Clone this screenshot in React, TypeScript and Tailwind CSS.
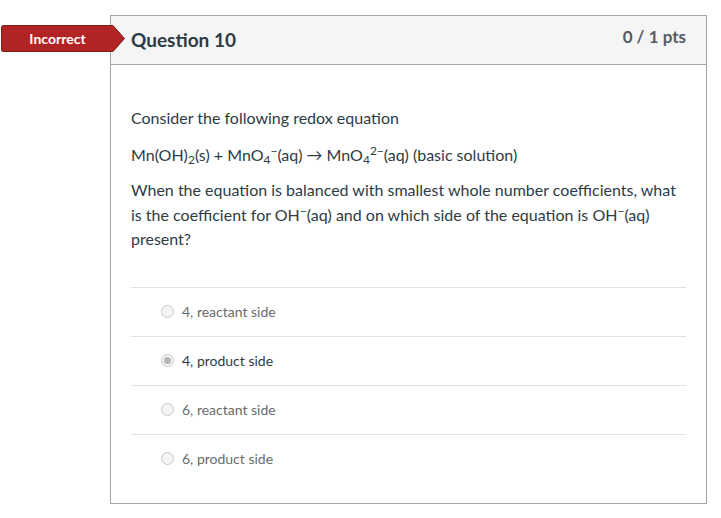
import React from 'react';

const answers = [
  { id: 'a', label: '4, reactant side', selected: false },
  { id: 'b', label: '4, product side', selected: true },
  { id: 'c', label: '6, reactant side', selected: false },
  { id: 'd', label: '6, product side', selected: false },
];

function Radio({ selected }: { selected: boolean }) {
  return (
    <span className="flex h-[13px] w-[13px] items-center justify-center rounded-full border border-[#c8c8c8] bg-[#f4f4f4]">
      {selected && <span className="h-[7px] w-[7px] rounded-full bg-[#b5b5b5]" />}
    </span>
  );
}

export default function App() {
  return (
    <div
      className="min-h-[518px] w-[721px] bg-white pt-[15px] text-[#2d3b45]"
      style={{ fontFamily: 'Lato, "Open Sans", sans-serif' }}
    >
      <div className="flex">
        {/* Incorrect badge */}
        <div className="relative w-[110px] shrink-0">
          <div className="absolute left-[1px] top-[10px] flex h-[27px] items-center">
            <div className="flex h-[27px] w-[112px] items-center justify-center rounded-l-[3px] border border-r-0 border-[#7d1a1a] bg-[#b22424] text-[14px] font-bold text-white">
              Incorrect
            </div>
            <svg width="13" height="27" viewBox="0 0 13 27" className="-ml-px block">
              <path d="M0 0.5 L1 0.5 L12.5 13.5 L1 26.5 L0 26.5 Z" fill="#b22424" stroke="#7d1a1a" strokeWidth="1" />
              <rect x="0" y="1" width="1.5" height="25" fill="#b22424" />
            </svg>
          </div>
        </div>

        {/* Question card */}
        <div className="w-[597px] border border-[#a5a5a5]">
          <div className="flex h-[49px] items-start justify-between border-b border-[#a5a5a5] bg-[#f5f5f5] pl-[20px] pr-[20px]">
            <h2 className="mt-[11px] text-[19px] font-bold leading-[26px] text-[#2d3b45]">Question 10</h2>
            <span className="mt-[9px] text-[17px] font-bold leading-[24px] text-[#555d63]">0 / 1 pts</span>
          </div>

          <div className="px-[20px] pb-[20px] pt-[41px]">
            <div className="text-[16px] leading-[24.5px]">
              <p className="mb-[12px]">Consider the following redox equation</p>
              <p className="mb-[11px]">
                Mn(OH)<sub>2</sub>(s) + MnO<sub>4</sub>
                <sup>−</sup>(aq) → MnO<sub>4</sub>
                <sup>2−</sup>(aq) (basic solution)
              </p>
              <p>
                When the equation is balanced with smallest whole number coefficients, what is the coefficient for OH
                <sup>−</sup>(aq) and on which side of the equation is OH<sup>−</sup>(aq) present?
              </p>
            </div>

            <div className="mt-[35px]">
              {answers.map((a) => (
                <div key={a.id} className="flex h-[49px] items-center border-t border-[#e2e2e2] pl-[30px]">
                  <Radio selected={a.selected} />
                  <span
                    className={
                      a.selected
                        ? 'ml-[8px] text-[14px] text-[#2d3b45]'
                        : 'ml-[8px] text-[14px] text-[#6b6b6b]'
                    }
                  >
                    {a.label}
                  </span>
                </div>
              ))}
            </div>
          </div>
        </div>
      </div>
    </div>
  );
}
